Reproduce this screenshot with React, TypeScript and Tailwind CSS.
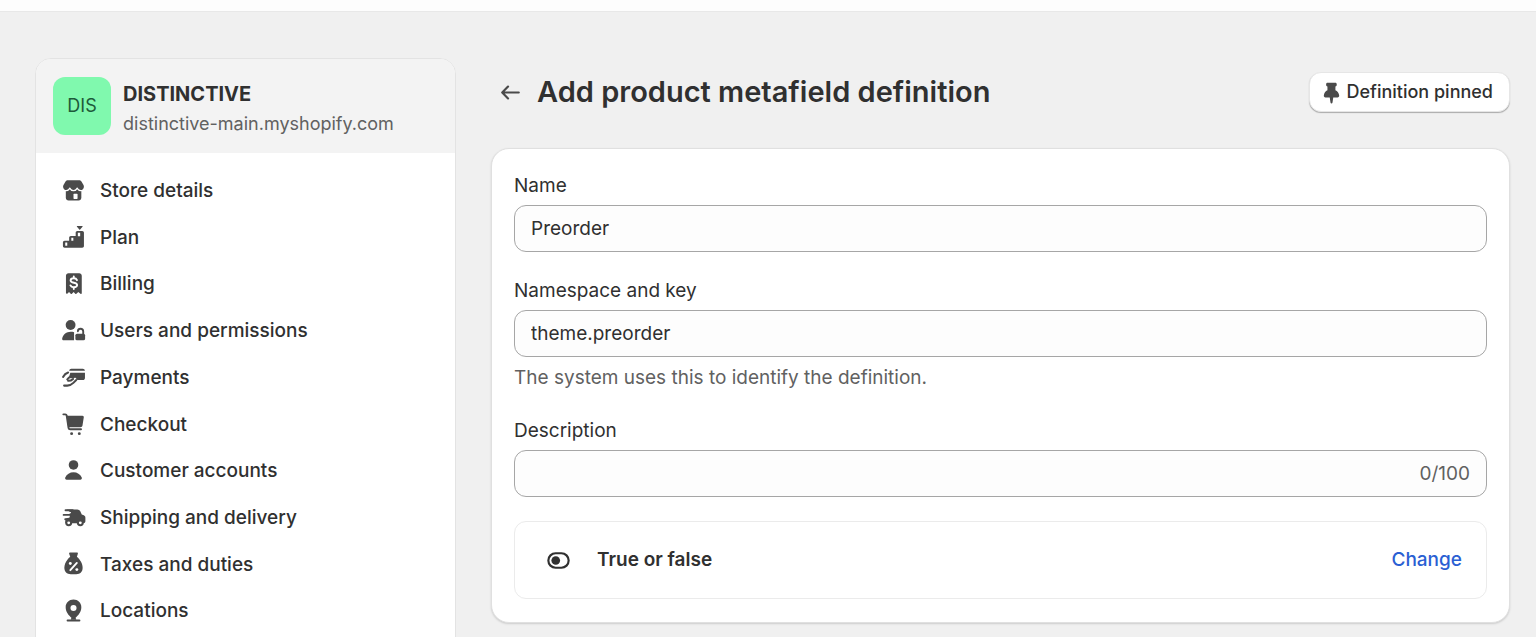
import { useState, type ReactNode } from "react";

function Icon({ children }: { children: ReactNode }) {
  return (
    <svg
      viewBox="0 0 20 20"
      className="size-[29px] shrink-0"
      fill="currentColor"
      aria-hidden="true"
    >
      {children}
    </svg>
  );
}

const stroke = {
  fill: "none",
  stroke: "currentColor",
  strokeWidth: 1.5,
  strokeLinecap: "round",
  strokeLinejoin: "round",
} as const;

const NAV_ITEMS: { label: string; icon: ReactNode }[] = [
  {
    label: "Store details",
    icon: (
      <>
        <path d="M4.700 8h10.700v7c0 1.100-.8 1.900-1.900 1.900H6.600c-1.100 0-1.900-.8-1.900-1.900z" />
        <path
          d="M6.200 2.900h7.600c.7 0 1.300.3 1.700.9l1.300 2.300c.4.700.5 1.400.2 2.100-.3.900-1 1.400-1.900 1.400-1 0-1.800-.8-2.600-1.900-.7 1.100-1.500 1.900-2.500 1.900s-1.800-.8-2.500-1.900c-.8 1.100-1.600 1.900-2.600 1.900-.9 0-1.600-.5-1.900-1.400-.3-.7-.2-1.400.2-2.100l1.300-2.300c.4-.6 1-.9 1.700-.9z"
          stroke="#fff"
          strokeWidth="2"
          className="[paint-order:stroke]"
        />
        <rect x="10" y="12.300" width="2.800" height="3.500" rx=".4" fill="#fff" />
      </>
    ),
  },
  {
    label: "Plan",
    icon: (
      <>
        <path d="M12.600 2.100h3.400c.3 0 .4.300.2.500l-1.600 1.900c-.2.200-.4.200-.6 0l-1.600-1.900c-.2-.2-.1-.5.200-.5z" />
        <path
          fillRule="evenodd"
          d="M3.900 12.200H7v-2c0-.7.500-1.200 1.200-1.200h3.300V6.700c0-.7.500-1.200 1.200-1.200H16c.7 0 1.200.5 1.200 1.200v9.100c0 .7-.5 1.200-1.200 1.200H3.900c-.7 0-1.200-.5-1.200-1.200v-2.400c0-.7.500-1.200 1.200-1.200zM4.300 13.400v2.300h1.400v-2.300zM8.500 10.200v2.100h1.400v-2.100zM13 6.800v2.300h1.600V6.800z"
        />
      </>
    ),
  },
  {
    label: "Billing",
    icon: (
      <>
        <path d="M6.500 3h7.500c.9 0 1.700.8 1.700 1.700v12c0 .5-.5.700-.9.400l-1.500-1.300-1.300 1.300c-.2.200-.6.200-.8 0l-1.100-1.300-1.200 1.300c-.2.200-.6.200-.8 0l-1.200-1.300-1.200 1.200c-.3.300-.9.100-.9-.4V4.700C4.800 3.800 5.600 3 6.500 3z" />
        <path
          {...stroke}
          stroke="#fff"
          strokeWidth="1.300"
          d="M10.200 5.200v1.200M10.200 12.600v1.200M12.400 7.700c-.3-.8-1.100-1.300-2.200-1.300-1.200 0-2.200.6-2.200 1.500s.8 1.300 2.300 1.600c1.400.3 2.200.8 2.200 1.600 0 .9-1 1.500-2.300 1.500-1.100 0-2-.5-2.300-1.300"
        />
      </>
    ),
  },
  {
    label: "Users and permissions",
    icon: (
      <>
        <circle cx="8" cy="6.200" r="3.400" />
        <path d="M10.400 11.200v5.600H3.200c-.7 0-1.200-.6-1-1.300.6-2.700 3-4.600 5.800-4.600.9 0 1.700.1 2.400.3z" />
        <rect x="11.300" y="12.200" width="6.700" height="4.600" rx="1.100" />
        <path
          {...stroke}
          strokeWidth="1.300"
          d="M13 10.500c.1-.9.800-1.700 1.800-1.700s1.900.8 1.900 1.900v2"
        />
      </>
    ),
  },
  {
    label: "Payments",
    icon: (
      <>
        <path d="M8.500 3.900h7.900c.8 0 1.400.6 1.500 1.500H7c.1-.9.700-1.500 1.500-1.500z" />
        <path d="M7.800 6.700h10.100v3.600c0 .8-.6 1.400-1.400 1.400h-3.800l-1.300-1.500-3 .4-1.600-.6z" />
        <path
          {...stroke}
          strokeWidth="1.400"
          d="M2.800 9.600c.8-1.500 1.900-2.500 3.500-3M5.700 11.300c.6-1.100 1.500-1.700 2.900-1.900M3.500 15.600h2.200c1.700 0 3-.7 4.200-1.900l2-2M6.300 12.300c1.300.1 2.300-.3 3.400-1.300"
        />
      </>
    ),
  },
  {
    label: "Checkout",
    icon: (
      <>
        <path d="M5.200 4.600h11c.6 0 1 .5.900 1.100l-.9 5.700c-.1.700-.7 1.200-1.400 1.200H6.300z" />
        <path
          {...stroke}
          strokeWidth="1.300"
          d="M3 3.700h1.300c.5 0 .9.300 1 .8l1.300 8.600c.1.600.5.900 1.100.9h7.500"
        />
        <circle cx="8.700" cy="17" r="1" />
        <circle cx="14" cy="17" r="1" />
      </>
    ),
  },
  {
    label: "Customer accounts",
    icon: (
      <>
        <circle cx="10" cy="6.200" r="3.300" />
        <path d="M10 11.200c2.500 0 4.700 1.400 5.700 3.600.3.800-.2 1.600-1 1.600H5.300c-.8 0-1.300-.8-1-1.600 1-2.200 3.200-3.600 5.700-3.600z" />
      </>
    ),
  },
  {
    label: "Shipping and delivery",
    icon: (
      <>
        <path d="M5 4.400h7.600c.9 0 1.600.5 2 1.200L15.700 8l1.400.5c.7.300 1.100.9 1.100 1.600v2.400c0 .8-.6 1.400-1.400 1.400H4.400V11l3-1.500V6z" />
        <path
          {...stroke}
          strokeWidth="1.300"
          d="M4.500 5h5M3.200 8.200h5M4.300 11.200h3"
        />
        <path
          stroke="#fff"
          strokeWidth=".8"
          fill="none"
          d="M3 6.600h5.200M3 9.700h4.200"
        />
        <circle cx="6.700" cy="13.700" r="1.700" fill="#fff" stroke="currentColor" strokeWidth="1.400" />
        <circle cx="14.700" cy="13.700" r="1.700" fill="#fff" stroke="currentColor" strokeWidth="1.400" />
      </>
    ),
  },
  {
    label: "Taxes and duties",
    icon: (
      <>
        <path d="M7.700 2.400h4.700c.5 0 .8.500.6.900L12.300 5.500H7.800L7 3.300c-.2-.4.200-.9.700-.9z" />
        <path d="M7.800 5.400h4.500c2.300 1.900 4 4.900 4 7.600 0 2.700-1.700 4.400-4.400 4.400H8.100c-2.700 0-4.400-1.700-4.400-4.400 0-2.700 1.700-5.700 4.100-7.600z" />
        <path {...stroke} stroke="#fff" strokeWidth="1.300" d="M12.300 9.600l-4.500 5" />
        <circle cx="7.800" cy="10" r="1" fill="#fff" />
        <circle cx="12.300" cy="14.200" r="1" fill="#fff" />
      </>
    ),
  },
  {
    label: "Locations",
    icon: (
      <>
        <path
          fillRule="evenodd"
          d="M10 2.400c3 0 5.400 2.300 5.400 5.300 0 3.200-2 5.500-4.200 7.500-.7.600-1.700.6-2.400 0-2.200-2-4.200-4.300-4.200-7.500 0-3 2.400-5.300 5.400-5.300zM10 10.400a2.100 2.100 0 1 0 0-4.200 2.100 2.100 0 0 0 0 4.200z"
        />
        <path {...stroke} strokeWidth="1.300" d="M5.900 16.900h8.200" />
        <path d="M8.600 14.800h2.800l.5 1.600H8.100z" />
      </>
    ),
  },
];

function TextField({
  id,
  label,
  value,
  onChange,
  help,
  maxLength,
}: {
  id: string;
  label: string;
  value: string;
  onChange: (value: string) => void;
  help?: string;
  maxLength?: number;
}) {
  return (
    <div>
      <label htmlFor={id} className="block leading-7">
        {label}
      </label>
      <div className="mt-[5px] flex h-[47px] items-center rounded-xl border border-[#a6a6a6] bg-[#fdfdfd] px-4 pt-0.5">
        <input
          id={id}
          type="text"
          value={value}
          maxLength={maxLength}
          onChange={(e) => onChange(e.target.value)}
          className="min-w-0 flex-1 bg-transparent outline-none"
        />
        {maxLength ? (
          <span className="text-[#616161]">
            {value.length}/{maxLength}
          </span>
        ) : null}
      </div>
      {help ? <p className="mt-[7px] leading-7 text-[#616161]">{help}</p> : null}
    </div>
  );
}

function Sidebar() {
  return (
    <aside className="w-[421px] shrink-0 self-start overflow-hidden rounded-t-2xl border border-[#e3e3e3] bg-white">
      <div className="flex h-[94px] items-center gap-3 bg-[#f3f3f3] px-[17px]">
        <div className="flex size-[58px] items-center justify-center rounded-xl bg-[#80f9ae] text-lg text-[#1d5a3a]">
          DIS
        </div>
        <div className="pt-1.5">
          <p className="text-xl leading-[29px] font-[650]">DISTINCTIVE</p>
          <p className="text-lg leading-[29px] text-[#616161]">
            distinctive-main.myshopify.com
          </p>
        </div>
      </div>
      <nav className="pt-[14px] pb-6">
        <ul className="grid h-[467px] auto-rows-fr">
          {NAV_ITEMS.map((item) => (
            <li key={item.label} className="flex">
              <a
                href="#"
                className="flex flex-1 items-center gap-3 px-[23px] font-[550]"
              >
                <span className="text-[#4a4a4a]">
                  <Icon>{item.icon}</Icon>
                </span>
                <span className="pt-0.5">{item.label}</span>
              </a>
            </li>
          ))}
        </ul>
      </nav>
    </aside>
  );
}

export default function App() {
  const [name, setName] = useState("Preorder");
  const [key, setKey] = useState("theme.preorder");
  const [description, setDescription] = useState("");

  return (
    <div className="flex h-screen flex-col overflow-hidden bg-[#f0f0f0] font-['Inter',sans-serif] text-[19px] text-[#303030]">
      <div className="h-3 shrink-0 border-b border-[#e8e8e8] bg-[#fdfdfd]" />

      <div className="flex gap-[35px] pt-[46px] pr-[26px] pl-[35px]">
        <Sidebar />

        <main className="min-w-0 flex-1 pt-[14px]">
          <header className="flex h-10 items-center justify-between">
            <div className="flex items-center gap-3">
              <button type="button" aria-label="Back" className="ml-[5px] text-[#4a4a4a]">
                <Icon>
                  <path {...stroke} d="M15.700 10H4.500M8.300 5.900L4.300 10l4 4.100" />
                </Icon>
              </button>
              <h1 className="text-[29px] leading-10 font-semibold">
                Add product metafield definition
              </h1>
            </div>
            <button
              type="button"
              className="flex h-10 items-center rounded-xl border border-[#e6e6e6] bg-white pr-4 pl-[7px] text-lg font-[550] shadow-[0_1px_1px_#aaa]"
            >
              <span className="text-[#4a4a4a]">
                <Icon>
                  <path d="M7.300 3.200h5.300c.6 0 1 .4 1 1v.6c0 .5-.4 1-.9 1v2.600c1.400.6 2.400 2 2.600 3.700.1.700-.4 1.300-1.100 1.300h-3l-.5 3.500c-.1.800-1.300.8-1.400 0l-.5-3.500h-3c-.7 0-1.200-.6-1.100-1.300.2-1.700 1.100-3.100 2.500-3.700V5.800c-.5 0-.9-.5-.9-1v-.6c0-.6.400-1 1-1z" />
                </Icon>
              </span>
              Definition pinned
            </button>
          </header>

          <section className="mt-9 rounded-[18px] border border-[#e0e0e0] bg-white px-[22px] py-[23px] shadow-[0_1px_2px_#ccc]">
            <div className="flex flex-col gap-[25px]">
              <TextField id="name" label="Name" value={name} onChange={setName} />
              <TextField
                id="key"
                label="Namespace and key"
                value={key}
                onChange={setKey}
                help="The system uses this to identify the definition."
              />
              <TextField
                id="description"
                label="Description"
                value={description}
                onChange={setDescription}
                maxLength={100}
              />
            </div>

            <div className="mt-6 flex h-[78px] items-center rounded-xl border border-[#ebebeb] pr-6 pl-[29px]">
              <Icon>
                <rect {...stroke} x="3" y="5" width="14" height="10" rx="5" />
                <circle cx="8.100" cy="10" r="3" />
              </Icon>
              <span className="ml-6 flex-1 font-semibold">True or false</span>
              <button type="button" className="font-[550] text-[#2a5fd3]">
                Change
              </button>
            </div>
          </section>
        </main>
      </div>
    </div>
  );
}
